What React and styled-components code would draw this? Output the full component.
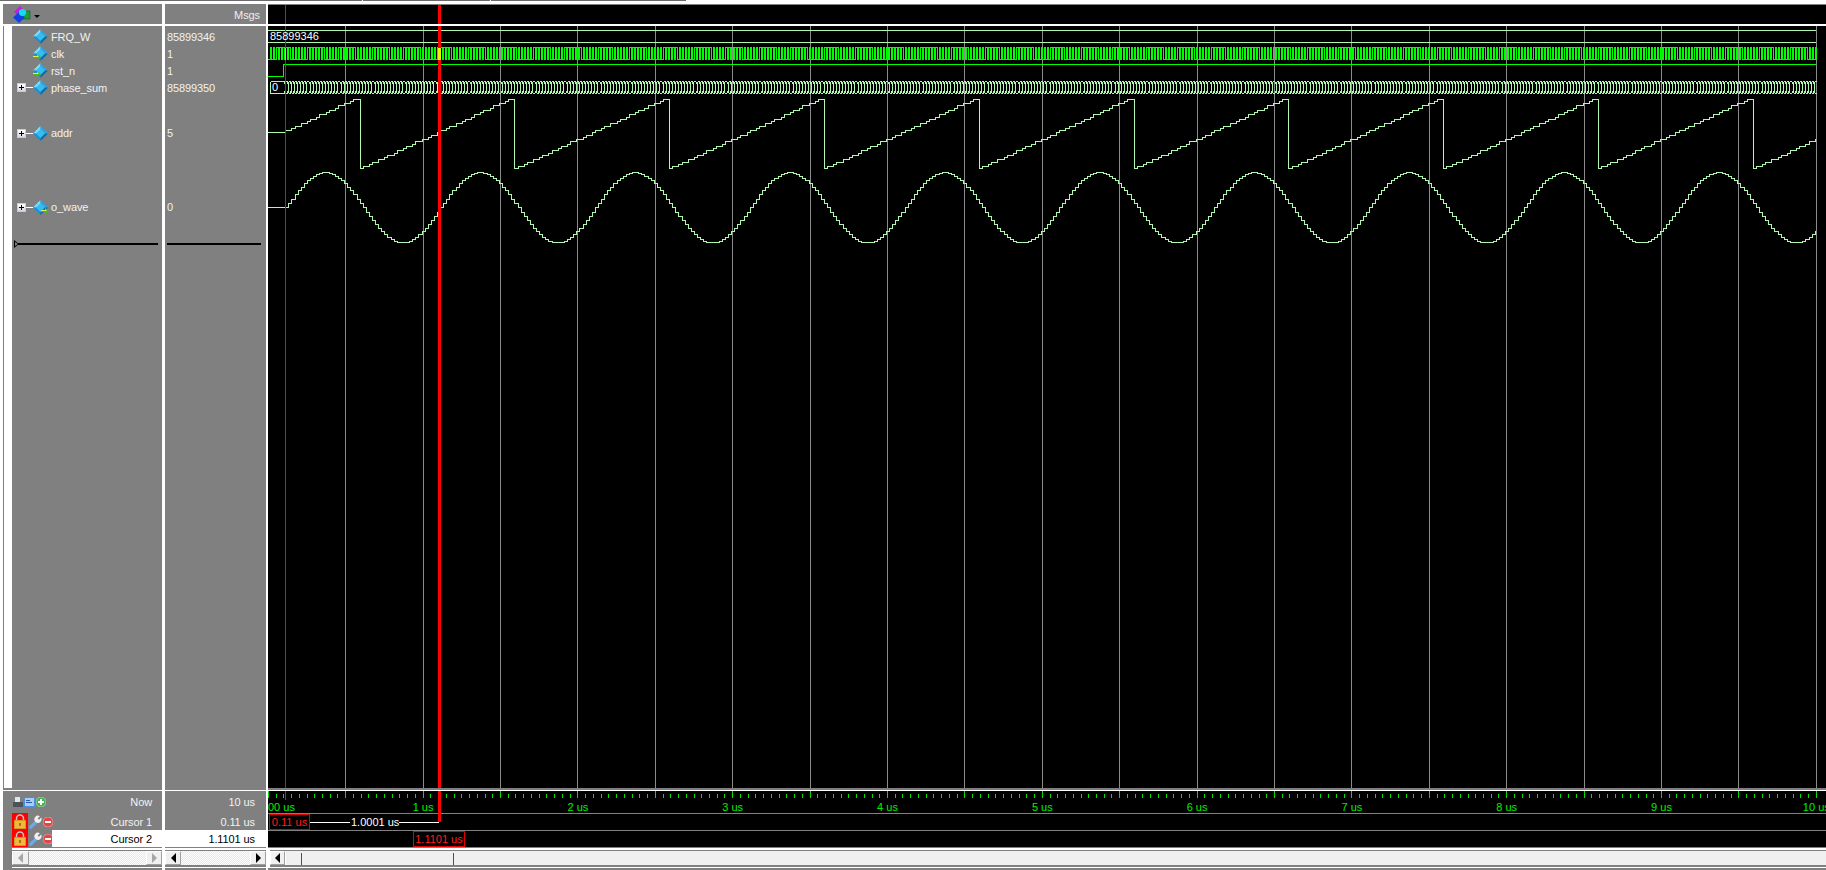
import styled, { createGlobalStyle } from "styled-components"

const GlobalStyle = createGlobalStyle`
    html, body {
        margin: 0;
        padding: 0;
        background: #fff;
        overflow: hidden;
    }
`;

// screen x of the wave pane, and scale of the time axis
const PANE_X = 268;
const X0 = 268.3;
const PX_US = 154.8;
const CLK = 0.02 * PX_US;
const END_X = 1816;
const C1_X = 285;

const toX = (t) => X0 + t * PX_US;
const snap = (v) => Math.round(v) + 0.5;
const edgeCount = Math.floor((END_X - 285.3) / CLK);

const addrAt = (n) => {
    const k = Math.round((n + 1) * 0.64) % 32;
    return k >= 16 ? k - 32 : k;
};

const addrPath = () => {
    let d = `M${PANE_X} 132.5`;
    for (let n = 0; n <= edgeCount; n++) {
        const x = snap(285.3 + n * CLK);
        d += `H${x}V${snap(132.3 - addrAt(n) * 2.25)}`;
    }
    return d + `H${END_X}`;
};

// the rom output follows the phase one clock late
const wavePath = () => {
    let d = `M${PANE_X} 207.5`;
    for (let n = 0; n <= edgeCount; n++) {
        const x = snap(285.3 + n * CLK);
        const y = 207.3 - 35 * Math.sin(2 * Math.PI * n * 0.02);
        d += `H${x}V${snap(y)}`;
    }
    return d + `H${END_X}`;
};

const clkPath = () => {
    let d = `M${PANE_X} 59.5`;
    let i = 0;
    while (X0 + i * CLK < END_X) {
        const up = snap(X0 + 1.548 + i * CLK);
        const down = snap(X0 + CLK + i * CLK);
        d += `H${up}V47.5H${Math.min(down, END_X)}V59.5`;
        i++;
    }
    return d;
};

const phasePath = () => {
    let d = "M270.5 81.5H285.5M270.5 93.5H285.5M270.5 81.5V93.5";
    for (let n = 0; n <= edgeCount; n++) {
        const x = Math.floor(285.3 + n * CLK);
        d += `M${x + 1} 81.5h2M${x + 1} 93.5h2`;
        d += `M${x - 0.5} 82v2M${x + 0.5} 82v2M${x - 0.5} 91v2M${x + 0.5} 91v2`;
        d += `M${x + 0.5} 84v7`;
    }
    return d;
};

const grid = Array.from({ length: 20 }, (_, i) => Math.floor(toX((i + 1) * 0.5)));
const ticks = Array.from({ length: 201 }, (_, i) => i);
const hours = Array.from({ length: 11 }, (_, i) => i);

const Window = styled.div`
    width: 1826px;
    height: 870px;
    background: #fff;
    display: flex;
    flex-direction: column;
    overflow: hidden;
    font-family: "Liberation Sans", Arial, sans-serif;
    font-size: 11px;
    letter-spacing: -0.1px;
`;

const TabStrip = styled.div`
    height: 4px;
    display: flex;
    align-items: flex-start;
    gap: 1px;
    background: #fff;
`;

const TabEdge = styled.div`
    height: 1px;
    width: ${(p) => p.$w}px;
    background: #6a6a6a;
`;

const Panes = styled.div`
    flex: 1;
    min-height: 0;
    display: flex;
    padding-left: 3px;
`;

const Column = styled.div`
    width: ${(p) => (p.$w ? `${p.$w}px` : "auto")};
    flex: ${(p) => (p.$w ? "none" : "1")};
    margin-right: ${(p) => p.$gap || 0}px;
    min-width: 0;
    display: flex;
    flex-direction: column;
`;

const Header = styled.div`
    height: 20px;
    border-top: 1px solid #808080;
    box-sizing: border-box;
    background: ${(p) => (p.$dark ? "#000" : "#808080")};
    color: #eee;
    display: flex;
    align-items: center;
    justify-content: ${(p) => (p.$end ? "flex-end" : "flex-start")};
    padding: ${(p) => (p.$end ? "0 6px 0 0" : "0 0 0 10px")};
    position: relative;
`;

const HeaderRule = styled.div`
    height: 2px;
    background: #fff;
`;

const Dropdown = styled.span`
    width: 0;
    height: 0;
    margin: 3px 0 0 3px;
    border-left: 3px solid transparent;
    border-right: 3px solid transparent;
    border-top: 3px solid #000;
`;

const Body = styled.div`
    flex: 1;
    min-height: 0;
    background: #808080;
    padding-top: 2px;
    box-sizing: border-box;
    border-left: ${(p) => (p.$strip ? "1px solid #808080" : "none")};
    position: relative;
    color: #f2f2f2;
    ${(p) => p.$strip && "&::before { content: ''; position: absolute; left: 0; top: 0; bottom: 0; width: 8px; background: #fff; }"}
`;

const SignalRow = styled.div`
    height: ${(p) => p.$h || 17}px;
    display: flex;
    align-items: center;
`;

const ExpandBox = styled.span`
    width: 9px;
    height: 9px;
    margin-left: 13px;
    box-sizing: border-box;
    background: linear-gradient(#fff, #d4d8e4);
    border: 1px solid #c8ccd8;
    position: relative;
    flex: none;

    &::before {
        content: "";
        position: absolute;
        left: 1px;
        top: 3px;
        width: 5px;
        height: 1px;
        background: #000;
    }

    &::after {
        content: "";
        position: absolute;
        left: 3px;
        top: 1px;
        width: 1px;
        height: 5px;
        background: #000;
    }
`;

const TreeLine = styled.span`
    width: 7px;
    height: 1px;
    background: #fff;
    flex: none;
`;

const TreeGap = styled.span`
    width: 29px;
    flex: none;
`;

const SignalName = styled.span`
    margin-left: 3px;
`;

const ValueCell = styled.span`
    padding-left: 2px;
`;

const Divider = styled.div`
    height: 2px;
    margin: ${(p) => (p.$tree ? "-1px 4px 0 11px" : "-1px 5px 0 2px")};
    background: #000;
    position: relative;
`;

const DividerMark = styled.span`
    position: absolute;
    left: -1px;
    top: -3px;
    width: 0;
    height: 0;
    border-left: 5px solid #000;
    border-top: 4px solid transparent;
    border-bottom: 4px solid transparent;

    &::after {
        content: "";
        position: absolute;
        left: -4px;
        top: -2px;
        width: 0;
        height: 0;
        border-left: 3px solid #808080;
        border-top: 2px solid transparent;
        border-bottom: 2px solid transparent;
    }
`;

const FooterRule = styled.div`
    height: 3px;
    background: linear-gradient(#808080 2px, #fff 2px);
`;

const FooterRow = styled.div`
    height: ${(p) => p.$h || 17}px;
    box-sizing: border-box;
    background: #808080;
    display: flex;
    align-items: center;
    color: #f2f2f2;
`;

const IconGroup = styled.div`
    width: ${(p) => p.$w}px;
    padding-left: ${(p) => p.$pad || 0}px;
    box-sizing: border-box;
    display: flex;
    align-items: center;
    gap: 1px;
    flex: none;
`;

const LockCell = styled.span`
    width: 16px;
    height: 17px;
    background: #ff0000;
    display: flex;
    align-items: center;
    justify-content: center;
    flex: none;
`;

const RowLabel = styled.div`
    flex: 1;
    height: 100%;
    display: flex;
    align-items: center;
    justify-content: flex-end;
    padding-right: ${(p) => p.$pad}px;
    background: ${(p) => (p.$active ? "#fff" : "transparent")};
    color: ${(p) => (p.$active ? "#000" : "inherit")};
`;

const ScrollFrame = styled.div`
    height: 23px;
    box-sizing: border-box;
    background: #fff;
    border-top: 1px solid #808080;
    border-bottom: 2px solid #808080;
    padding: 2px 0 1px;
    padding-left: ${(p) => p.$pad || 0}px;
    ${(p) => p.$side && "background: linear-gradient(90deg, #808080 9px, #fff 9px);"}
`;

const ScrollBar = styled.div`
    height: 17px;
    box-sizing: border-box;
    border-top: 1px solid #808080;
    border-bottom: 2px solid #808080;
    display: flex;
    background: #f0f0f0;
    position: relative;
`;

const ScrollButton = styled.span`
    width: ${(p) => p.$w || 16}px;
    flex: none;
    box-sizing: border-box;
    background: #f0f0f0;
    border: 1px solid #fff;
    border-right-color: #a0a0a0;
    border-bottom-color: #a0a0a0;
    display: flex;
    align-items: center;
    justify-content: center;

    &::before {
        content: "";
        width: 0;
        height: 0;
        border-top: 5px solid transparent;
        border-bottom: 5px solid transparent;
        ${(p) => (p.$left ? "border-right" : "border-left")}: 5px solid ${(p) => (p.$muted ? "#a6a6a6" : "#000")};
    }
`;

const ScrollTrack = styled.span`
    flex: 1;
    background-color: #fff;
    background-image: ${(p) => (p.$hatch ? "repeating-conic-gradient(#e6e6e6 0 25%, #fff 0 50%)" : "none")};
    background-size: 2px 2px;
    ${(p) => !p.$hatch && "background: #f0f0f0; border-left: 1px solid #fff;"}
`;

const ScrollMark = styled.span`
    position: absolute;
    left: ${(p) => p.$x}px;
    top: 2px;
    bottom: 0;
    width: 1px;
    background: #d81818;
`;

const HeadCursor = styled.span`
    position: absolute;
    left: ${(p) => p.$x}px;
    top: 0;
    bottom: 0;
    width: ${(p) => p.$w}px;
    background: #f00;
`;

const Canvas = styled.div`
    flex: 1;
    min-height: 0;
    background: #000;
    position: relative;
`;

const WaveSvg = styled.svg`
    display: block;
    position: absolute;
    left: 0;
    top: 0;
    width: 100%;
    height: 100%;
`;

const BusValue = styled.span`
    position: absolute;
    left: ${(p) => p.$x}px;
    top: ${(p) => p.$y}px;
    line-height: 13px;
    color: #fff;
    letter-spacing: 0;
`;

const CursorSlot = styled.div`
    height: 56px;
    display: flex;
`;

const Ruler = styled.div`
    flex: 1;
    min-width: 0;
    background: #000;
    position: relative;
    overflow: hidden;
`;

const RulerRow = styled.div`
    height: ${(p) => p.$h}px;
    box-sizing: border-box;
    border-top: ${(p) => (p.$line ? "1px solid #808080" : "none")};
`;

const TimeLabel = styled.span`
    position: absolute;
    top: 9px;
    line-height: 14px;
    color: #00f000;
    letter-spacing: 0;
    white-space: nowrap;
    transform: ${(p) => (p.$first ? "none" : "translateX(-50%)")};
`;

const CursorBox = styled.span`
    position: absolute;
    left: ${(p) => p.$x}px;
    top: ${(p) => p.$y}px;
    width: ${(p) => p.$w}px;
    height: 16px;
    box-sizing: border-box;
    border: 1px solid #e00000;
    color: #ff1c1c;
    line-height: 14px;
    text-align: center;
    letter-spacing: 0;
    background: #000;
    white-space: nowrap;
`;

const DeltaLabel = styled.span`
    position: absolute;
    left: 82px;
    top: 24px;
    line-height: 14px;
    color: #fff;
    letter-spacing: 0;
    background: #000;
    padding: 0 0 0 1px;
    white-space: nowrap;
`;

const Diamond = ({ arrow }) => (
    <svg width="15" height="15" viewBox="0 0 15 15" style={{ flex: "none", overflow: "visible" }}>
        <polygon points="7.5,0 0,7.5 7.5,7.5" fill="#7fdcff" />
        <polygon points="7.5,0 15,7.5 7.5,7.5" fill="#2aa6e6" />
        <polygon points="0,7.5 7.5,15 7.5,7.5" fill="#1e8fd2" />
        <polygon points="15,7.5 7.5,15 7.5,7.5" fill="#0c6aa6" />
        <polygon points="7.5,3 3,7.5 7.5,12 12,7.5" fill="#35bdf2" />
        {arrow === "in" && (
            <g>
                <polygon points="0,10 4,10 4,8 8,11 4,14 4,12 0,12" fill="#3fbf1f" />
                <polygon points="0,10 4,10 4,9 6,11 0,11" fill="#e6f04a" />
            </g>
        )}
        {arrow === "out" && (
            <g>
                <polygon points="8,10 12,10 12,8 16,11 12,14 12,12 8,12" fill="#3fbf1f" />
                <polygon points="8,10 12,10 12,9 14,11 8,11" fill="#e6f04a" />
            </g>
        )}
    </svg>
);

const Logo = () => (
    <svg width="18" height="17" viewBox="0 0 18 17" style={{ flex: "none" }}>
        <rect x="6" y="5" width="11" height="8" fill="#1f9a3c" stroke="#0b5a20" strokeWidth="0.6" />
        <polygon points="7,0 13,6 7,11 1,6" fill="#c020d8" />
        <polygon points="6,6 12,11.5 6,17 0,11.5" fill="#1040e8" />
        <circle cx="9.5" cy="6.5" r="3.6" fill="#18d8f0" />
    </svg>
);

const Lock = () => (
    <svg width="12" height="15" viewBox="0 0 12 15">
        <path d="M2.5 7V4.5a3.5 3.5 0 0 1 7 0V7" fill="none" stroke="#c4c4c4" strokeWidth="1.6" />
        <rect x="0.5" y="6.5" width="11" height="8" fill="#f0b840" stroke="#d89820" />
        <rect x="5" y="9" width="2" height="3" fill="#a87810" />
    </svg>
);

const Wrench = () => (
    <svg width="13" height="14" viewBox="0 0 13 14" style={{ flex: "none" }}>
        <path d="M1.8 12.2L7.6 6.4" stroke="#70a8f0" strokeWidth="3.2" strokeLinecap="round" />
        <path d="M6.2 6.6a3.6 3.6 0 0 1 4.6-5.4L8.6 3.4l1.4 1.4 2.2-2.2a3.6 3.6 0 0 1-5.2 4.6z" fill="#f0f0f0" />
    </svg>
);

const Minus = () => (
    <svg width="10" height="10" viewBox="0 0 10 10" style={{ flex: "none" }}>
        <circle cx="5" cy="5" r="5" fill="#e04848" />
        <circle cx="5" cy="5" r="5" fill="none" stroke="#f09090" strokeWidth="1" />
        <rect x="2" y="4" width="6" height="2" fill="#fff" />
    </svg>
);

const Printer = () => (
    <svg width="10" height="10" viewBox="0 0 10 10" style={{ flex: "none" }}>
        <rect x="2" y="0" width="5" height="5" fill="#dfe6ee" />
        <rect x="0" y="5" width="10" height="5" fill="#4a525a" />
    </svg>
);

const Sheet = () => (
    <svg width="11" height="11" viewBox="0 0 11 11" style={{ flex: "none" }}>
        <rect width="11" height="10" fill="#4f8ce0" />
        <rect x="1" y="1" width="9" height="8" fill="#a8ccf4" />
        <rect x="2" y="3" width="4" height="1" fill="#2a5ca8" />
        <rect x="2" y="5" width="6" height="1" fill="#2a5ca8" />
    </svg>
);

const PlusCircle = () => (
    <svg width="10" height="10" viewBox="0 0 10 10" style={{ flex: "none" }}>
        <circle cx="5" cy="5" r="5" fill="#48b050" />
        <circle cx="5" cy="5" r="5" fill="none" stroke="#90d898" strokeWidth="1" />
        <rect x="2" y="4" width="6" height="2" fill="#fff" />
        <rect x="4" y="2" width="2" height="6" fill="#fff" />
    </svg>
);

const WaveCanvas = () => (
    <Canvas>
        <WaveSvg viewBox={`${PANE_X} 26 1558 762`} preserveAspectRatio="none">
            <g stroke="#8a8a8a" shapeRendering="crispEdges">
                {grid.map((x) => (
                    <line key={x} x1={x + 0.5} x2={x + 0.5} y1="26" y2="788" />
                ))}
            </g>
            <g fill="none" stroke="#b0f8b0" shapeRendering="crispEdges">
                <path d={`M${PANE_X} 30.5H${END_X}M${PANE_X} 42.5H${END_X}`} />
                <path d={phasePath()} />
                <path d={addrPath()} />
                <path d={wavePath()} />
            </g>
            <g fill="none" stroke="#00ff00" shapeRendering="crispEdges">
                <path d={clkPath()} />
                <path d={`M${PANE_X} 76.5H283.5V64.5H${END_X}`} />
            </g>
            <g shapeRendering="crispEdges">
                <rect x={C1_X} y="26" width="1" height="762" fill="#ff0000" />
                <rect x="438" y="26" width="3" height="762" fill="#ff0000" />
                <rect x={C1_X} y="48" width="1" height="12" fill="#ffe000" />
                <rect x="438" y="48" width="3" height="12" fill="#f0f000" />
            </g>
        </WaveSvg>
        <BusValue $x={2} $y={4}>85899346</BusValue>
        <BusValue $x={4} $y={55}>0</BusValue>
    </Canvas>
);

const CursorPane = () => (
    <Ruler>
        <RulerRow $h={22} />
        <RulerRow $h={17} $line />
        <RulerRow $h={17} $line />
        <WaveSvg viewBox={`${PANE_X} 791 1558 56`} preserveAspectRatio="none">
            <g shapeRendering="crispEdges">
                {ticks.map((i) => {
                    const x = Math.floor(toX(i * 0.05));
                    const major = i % 10 === 0;
                    return <rect key={i} x={x} y={major ? 791 : 794} width="1" height={major ? 7 : 4} fill="#00e000" />;
                })}
                <rect x={C1_X} y="791" width="1" height="9" fill="#ff0000" />
                <rect x="438" y="791" width="3" height="31" fill="#ff0000" />
                <rect x="310" y="822" width="129" height="1" fill="#fff" />
            </g>
        </WaveSvg>
        {hours.map((i) => (
            <TimeLabel key={i} $first={i === 0} style={{ left: i === 0 ? 0 : toX(i) - PANE_X }}>
                {i === 0 ? "00 us" : `${i} us`}
            </TimeLabel>
        ))}
        <CursorBox $x={1} $y={23} $w={41}>0.11 us</CursorBox>
        <DeltaLabel>1.0001 us</DeltaLabel>
        <CursorBox $x={145} $y={40} $w={52}>1.1101 us</CursorBox>
    </Ruler>
);

const App = () => (
    <Window>
        <GlobalStyle />
        <TabStrip>
            <TabEdge $w={362} />
            <TabEdge $w={127} />
            <TabEdge $w={195} />
        </TabStrip>
        <Panes>
            <Column $w={159} $gap={3}>
                <Header>
                    <Logo />
                    <Dropdown />
                </Header>
                <HeaderRule />
                <Body $strip>
                    <SignalRow><TreeGap /><Diamond /><SignalName>FRQ_W</SignalName></SignalRow>
                    <SignalRow><TreeGap /><Diamond arrow="in" /><SignalName>clk</SignalName></SignalRow>
                    <SignalRow><TreeGap /><Diamond arrow="in" /><SignalName>rst_n</SignalName></SignalRow>
                    <SignalRow><ExpandBox /><TreeLine /><Diamond /><SignalName>phase_sum</SignalName></SignalRow>
                    <SignalRow $h={74}><ExpandBox /><TreeLine /><Diamond /><SignalName>addr</SignalName></SignalRow>
                    <SignalRow $h={74}><ExpandBox /><TreeLine /><Diamond arrow="out" /><SignalName>o_wave</SignalName></SignalRow>
                    <Divider $tree><DividerMark /></Divider>
                </Body>
                <FooterRule />
                <FooterRow $h={22}>
                    <IconGroup $w={52} $pad={10}>
                        <Printer />
                        <Sheet />
                        <PlusCircle />
                    </IconGroup>
                    <RowLabel $pad={10}>Now</RowLabel>
                </FooterRow>
                <FooterRow>
                    <IconGroup $w={49} $pad={9}>
                        <LockCell><Lock /></LockCell>
                        <Wrench />
                        <Minus />
                    </IconGroup>
                    <RowLabel $pad={10}>Cursor 1</RowLabel>
                </FooterRow>
                <FooterRow>
                    <IconGroup $w={49} $pad={9}>
                        <LockCell><Lock /></LockCell>
                        <Wrench />
                        <Minus />
                    </IconGroup>
                    <RowLabel $pad={10} $active>Cursor 2</RowLabel>
                </FooterRow>
                <ScrollFrame $side $pad={9}>
                    <ScrollBar>
                        <ScrollButton $w={17} $left $muted />
                        <ScrollTrack $hatch />
                        <ScrollButton $w={16} $muted />
                    </ScrollBar>
                </ScrollFrame>
            </Column>
            <Column $w={101} $gap={2}>
                <Header $end>Msgs</Header>
                <HeaderRule />
                <Body>
                    <SignalRow><ValueCell>85899346</ValueCell></SignalRow>
                    <SignalRow><ValueCell>1</ValueCell></SignalRow>
                    <SignalRow><ValueCell>1</ValueCell></SignalRow>
                    <SignalRow><ValueCell>85899350</ValueCell></SignalRow>
                    <SignalRow $h={74}><ValueCell>5</ValueCell></SignalRow>
                    <SignalRow $h={74}><ValueCell>0</ValueCell></SignalRow>
                    <Divider />
                </Body>
                <FooterRule />
                <FooterRow $h={22}><RowLabel $pad={11}>10 us</RowLabel></FooterRow>
                <FooterRow><RowLabel $pad={11}>0.11 us</RowLabel></FooterRow>
                <FooterRow><RowLabel $pad={11} $active>1.1101 us</RowLabel></FooterRow>
                <ScrollFrame>
                    <ScrollBar>
                        <ScrollButton $w={16} $left />
                        <ScrollTrack $hatch />
                        <ScrollButton $w={16} />
                    </ScrollBar>
                </ScrollFrame>
            </Column>
            <Column>
                <Header $dark>
                    <HeadCursor $x={17} $w={1} />
                    <HeadCursor $x={170} $w={3} />
                </Header>
                <HeaderRule />
                <WaveCanvas />
                <FooterRule />
                <CursorSlot>
                    <CursorPane />
                </CursorSlot>
                <ScrollFrame $pad={2}>
                    <ScrollBar>
                        <ScrollButton $w={15} $left />
                        <ScrollTrack />
                        <ScrollMark $x={31} />
                        <ScrollMark $x={183} />
                    </ScrollBar>
                </ScrollFrame>
            </Column>
        </Panes>
    </Window>
);

export default App;
